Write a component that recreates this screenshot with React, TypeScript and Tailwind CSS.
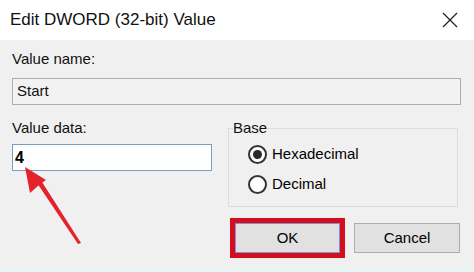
import React from "react";

function CloseIcon() {
  return (
    <svg width="16" height="16" viewBox="0 0 16 16" className="block">
      <path d="M1 1 L15 15 M15 1 L1 15" stroke="#222" strokeWidth="1.3" fill="none" />
    </svg>
  );
}

function Radio({ checked, label }: { checked?: boolean; label: string }) {
  return (
    <div className="flex items-center h-[20px] gap-[5px]">
      <span className="w-[19px] h-[19px] rounded-full border-2 border-[#333] bg-white flex items-center justify-center">
        {checked && <span className="w-[9px] h-[9px] rounded-full bg-[#2a2a2a]" />}
      </span>
      <span className="text-[15px] text-black leading-[18px]">{label}</span>
    </div>
  );
}

// red annotation arrow pointing at the value field
function Arrow() {
  return (
    <svg width="474" height="272" className="absolute left-0 top-0 pointer-events-none">
      <polygon points="25,167 46,180 39,185 30,193" fill="#e4222b" />
      <polygon points="37,183 42,182 81,243 78,244" fill="#e4222b" />
    </svg>
  );
}

export default function App() {
  return (
    <div className="relative w-[474px] h-[272px] bg-[#e6f4f6] overflow-hidden font-['Liberation_Sans',Arial,sans-serif] text-black">
      <div className="h-[40px] bg-white flex items-center justify-between pl-[10px] pr-[16px]">
        <span className="text-[17px] leading-[20px] text-[#111]">Edit DWORD (32-bit) Value</span>
        <CloseIcon />
      </div>

      <div className="h-[228px] bg-[#f0f0f0] pl-[12px] pr-[13px] pt-[10px]">
        <div className="text-[15px] leading-[18px] text-[#111]">Value name:</div>
        <div className="mt-[10px] h-[27px] border border-[#adadad] bg-[#f2f2f2] flex items-center pl-[4px] text-[15px] text-[#111]">
          Start
        </div>

        <div className="flex mt-[14px]">
          <div className="w-[200px]">
            <div className="text-[15px] leading-[18px] text-[#111]">Value data:</div>
            <div className="mt-[7px] h-[27px] border border-[#7f9db9] bg-white flex items-center pl-[2px] text-[16px] font-bold">
              4
            </div>
          </div>

          <fieldset className="ml-[16px] w-[230px] border border-[#dcdcdc] pl-[4px] pb-[12px]">
            <legend className="text-[15px] leading-[18px] text-[#111]">Base</legend>
            <div className="pl-[15px] pt-[7px] flex flex-col gap-[10px]">
              <Radio checked label="Hexadecimal" />
              <Radio label="Decimal" />
            </div>
          </fieldset>
        </div>

        <div className="flex justify-end items-center mt-[11px] pr-[1px]">
          <div className="border-[5px] border-[#d30f1d]">
            <button className="w-[105px] h-[30px] bg-[#e1e1e1] border border-[#8a8ad8] text-[15px] text-black">
              OK
            </button>
          </div>
          <button className="ml-[9px] w-[106px] h-[30px] bg-[#e1e1e1] border border-[#adadad] text-[15px] text-black">
            Cancel
          </button>
        </div>
      </div>

      <Arrow />
    </div>
  );
}
